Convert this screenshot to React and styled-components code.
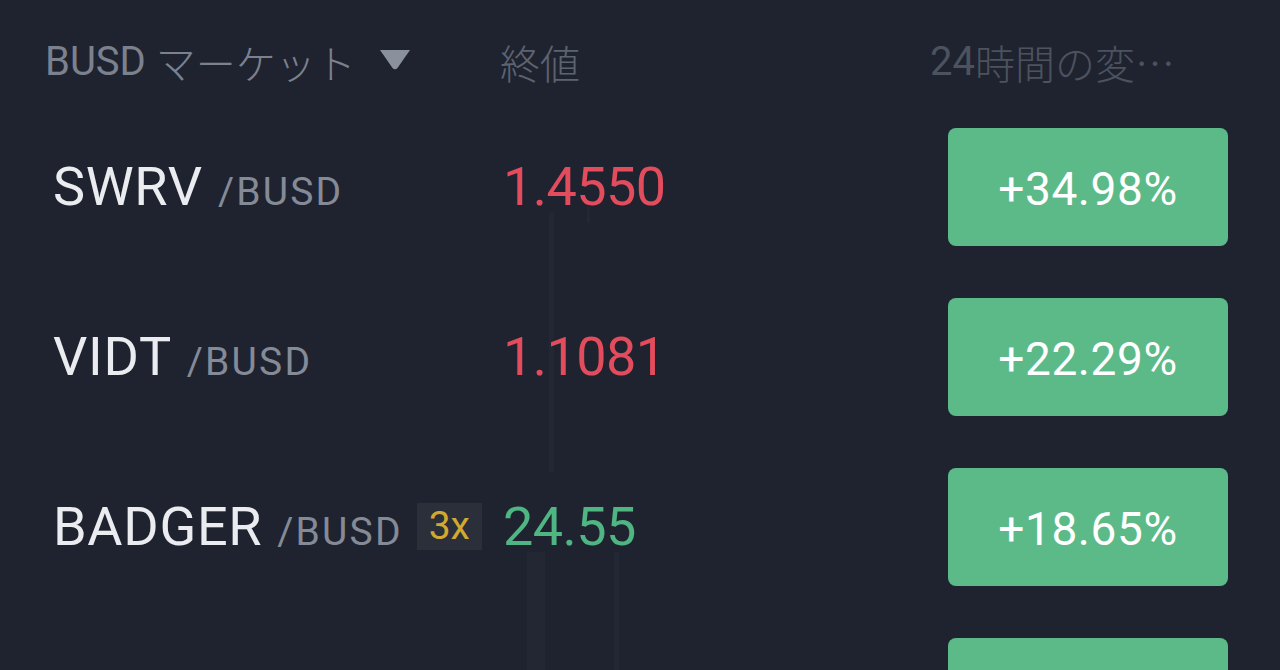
import React from "react";
import styled, { createGlobalStyle } from "styled-components";

const Global = createGlobalStyle`
  html, body { margin: 0; padding: 0; background: #1f2330; }
  body { font-family: Roboto, "Noto Sans CJK JP", sans-serif; -webkit-font-smoothing: antialiased; }
  #root { min-height: 670px; }
`;

const Page = styled.div`
  position: relative;
  width: 1280px;
  height: 670px;
  overflow: hidden;
  background: #1f2330;
`;

const Backdrop = styled.div`
  position: absolute;
  inset: 0;
  pointer-events: none;
`;

const Wick = styled.div`
  position: absolute;
  background: #222733;
`;

const Content = styled.div`
  position: relative;
  display: flex;
  flex-direction: column;
`;

const Header = styled.div`
  display: grid;
  grid-template-columns: 455px 1fr 298px;
  align-items: start;
  height: 102px;
  box-sizing: border-box;
  padding: 38px 52px 0 45px;
  font-size: 40px;
  line-height: 48px;
  font-family: Roboto, "Noto Sans CJK JP", sans-serif;
`;

const HeadLabel = styled.div`
  color: ${(p) => p.$color};
  display: flex;
  align-items: flex-start;
  white-space: nowrap;
  min-width: 0;
`;

const Jp = styled.span`
  font-family: "Noto Sans CJK JP", sans-serif;
  font-weight: 300;
  line-height: 48px;
  letter-spacing: ${(p) => p.$ls || "0px"};
`;

const Caret = styled.svg`
  margin-left: 23px;
  margin-top: 11px;
  width: 32px;
  height: 21px;
  flex: none;
`;

const Row = styled.div`
  display: grid;
  grid-template-columns: 450px 1fr 280px;
  align-items: center;
  height: 170px;
  box-sizing: border-box;
  padding: 0 52px 0 53px;
`;

const NameCell = styled.div`
  display: flex;
  align-items: center;
`;

const Pair = styled.div`
  display: flex;
  align-items: baseline;
  line-height: 1;
`;

const Base = styled.span`
  font-size: 54px;
  color: #eaecef;
  font-weight: 400;
  letter-spacing: 0.7px;
`;

const Quote = styled.span`
  font-size: 39px;
  color: #848b97;
  margin-left: 15px;
  letter-spacing: 2.2px;
`;

const Lev = styled.span`
  margin-left: 14px;
  height: 47px;
  padding: 0 12px;
  display: flex;
  align-items: center;
  background: #2a2f3a;
  color: #d2a830;
  font-size: 39px;
  line-height: 1;
  margin-top: -2px;
`;

const Price = styled.div`
  font-size: 54px;
  line-height: 1;
  letter-spacing: -0.6px;
  color: ${(p) => (p.$up ? "#4fb583" : "#e24c5c")};
`;

const Change = styled.div`
  height: 118px;
  border-radius: 8px;
  background: #5cba89;
  color: #ffffff;
  display: flex;
  align-items: center;
  justify-content: center;
  font-size: 46px;
  font-weight: 400;
  letter-spacing: 0.6px;
  padding-top: 4px;
  box-sizing: border-box;
`;

const rows = [
  { base: "SWRV", price: "1.4550", up: false, change: "+34.98%" },
  { base: "VIDT", price: "1.1081", up: false, change: "+22.29%" },
  { base: "BADGER", price: "24.55", up: true, change: "+18.65%", lev: "3x" },
];

export default function App() {
  return (
    <Page>
      <Global />
      <Backdrop>
        <Wick style={{ left: 549, top: 212, width: 5, height: 260 }} />
        <Wick style={{ left: 587, top: 205, width: 3, height: 18 }} />
        <Wick style={{ left: 527, top: 552, width: 18, height: 118 }} />
        <Wick style={{ left: 614, top: 552, width: 5, height: 118 }} />
      </Backdrop>
      <Content>
        <Header>
          <HeadLabel $color="#7b818d">
            BUSD&nbsp;<Jp>マーケット</Jp>
            <Caret viewBox="0 0 32 21">
              <path d="M1 1 H31 L18.5 19 Q16 21.5 13.5 19 Z" fill="#8a909c" />
            </Caret>
          </HeadLabel>
          <HeadLabel $color="#5d636f">
            <Jp>終値</Jp>
          </HeadLabel>
          <HeadLabel $color="#4c525e">
            24<Jp>時間の変…</Jp>
          </HeadLabel>
        </Header>
        {rows.map((r) => (
          <Row key={r.base}>
            <NameCell>
              <Pair>
                <Base>{r.base}</Base>
                <Quote>/BUSD</Quote>
              </Pair>
              {r.lev && <Lev>{r.lev}</Lev>}
            </NameCell>
            <Price $up={r.up}>{r.price}</Price>
            <Change>{r.change}</Change>
          </Row>
        ))}
        <Row>
          <div />
          <div />
          <Change aria-hidden="true" />
        </Row>
      </Content>
    </Page>
  );
}
